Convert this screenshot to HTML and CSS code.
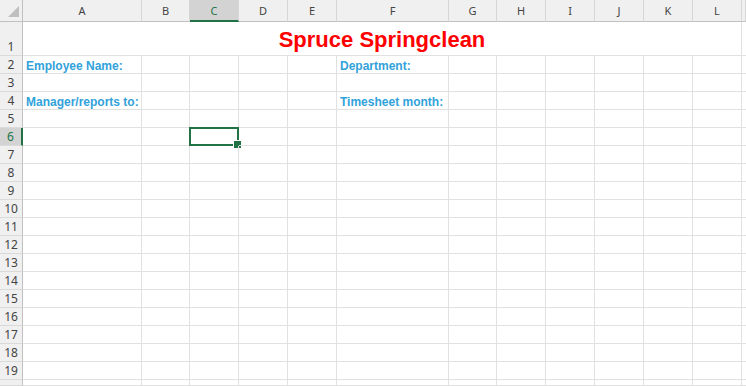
FILE: index.html
```html
<!DOCTYPE html>
<html lang="en">
<head>
    <meta charset="UTF-8">
    <title>Spruce Springclean</title>
    <link rel="stylesheet" href="styles.css">
</head>
<body>
<div class="sheet" id="sheet">
    <div class="corner"><span class="tri"></span></div>
</div>
<script>
    //列：A..L 再加一列露出一半的 M
    var cols=['A','B','C','D','E','F','G','H','I','J','K','L',''];
    var oSheet=document.getElementById('sheet');
    var selCol=2, selRow=6;
    function cell(cls,text) {
        var d=document.createElement('div');
        d.className=cls;
        if(text) d.textContent=text;
        oSheet.appendChild(d);
        return d;
    }
    for(var i=0; i<cols.length; i++){
        cell('colhead'+(i===selCol?' on':''),cols[i]);
    }
    //每行的内容：{列号:[类名,文字]}
    var content={
        2:{0:['label','Employee Name:'],5:['label','Department:']},
        4:{0:['label','Manager/reports to:'],5:['label','Timesheet month:']}
    };
    for(var r=1; r<=20; r++){
        cell('rowhead'+(r===selRow?' on':''),r<20?String(r):'');
        if(r===1){
            cell('cell title','Spruce Springclean');
            cell('cell last','');
            continue;
        }
        for(var c=0; c<cols.length; c++){
            var item=content[r]&&content[r][c];
            var d=cell('cell'+(c===cols.length-1?' last':'')+(item?' '+item[0]:''),item?item[1]:'');
            if(r===selRow&&c===selCol){
                var s=document.createElement('span');
                s.className='select';
                d.appendChild(s);
            }
        }
    }
</script>
</body>
</html>
```
FILE: styles.css
```css
*{
    margin: 0;
    padding: 0;
    box-sizing: border-box;
}
body{
    width: 746px;
    height: 386px;
    overflow: hidden;
    background: #fff;
    font-family: "Liberation Sans", Arial, sans-serif;
}
.sheet{
    display: grid;
    grid-template-columns: 23px 119px 48px 49px 49px 49px 112px 48px 49px 49px 49px 49px 49px 1fr;
    grid-template-rows: 22px 34px repeat(18, 18px) 1fr;
    height: 386px;
}
.corner{
    background: #f0f0f0;
    border-right: 1px solid #c0c0c0;
    border-bottom: 1px solid #c0c0c0;
    display: flex;
    align-items: flex-end;
    justify-content: flex-end;
    padding: 0 3px 4px 0;
}
.tri{
    width: 0;
    height: 0;
    border-left: 11px solid transparent;
    border-bottom: 11px solid #bfbfbf;
}
.colhead{
    background: #f0f0f0;
    border-right: 1px solid #d6d6d6;
    border-bottom: 1px solid #c0c0c0;
    font-family: "Noto Sans", sans-serif;
    font-size: 11px;
    line-height: 22px;
    text-align: center;
    color: #444;
}
.colhead.on{
    background: #d3d3d3;
    color: #217346;
    border-bottom: 2px solid #217346;
}
.rowhead{
    background: #f0f0f0;
    border-right: 1px solid #c0c0c0;
    border-bottom: 1px solid #dadada;
    font-family: "Noto Sans", sans-serif;
    font-size: 12px;
    text-align: center;
    color: #444;
    display: flex;
    align-items: flex-end;
    justify-content: center;
    line-height: 17px;
}
.rowhead.on{
    background: #d3d3d3;
    color: #217346;
    border-right: 2px solid #217346;
}
.cell{
    position: relative;
    border-right: 1px solid #e1e1e1;
    border-bottom: 1px solid #e1e1e1;
    font-size: 12px;
    line-height: 17px;
    white-space: nowrap;
}
.cell.last{
    border-right: none;
}
.title{
    grid-column: 2 / 14;
    text-align: center;
    color: #ff0000;
    font-weight: bold;
    font-size: 22px;
    line-height: 26px;
    padding-top: 5px;
}
.label{
    color: #31a2da;
    font-weight: bold;
    padding: 2px 0 0 3px;
}
.select{
    position: absolute;
    left: -1px;
    top: -1px;
    right: -1px;
    bottom: -1px;
    border: 2px solid #217346;
}
.select::after{
    content: '';
    position: absolute;
    right: -5px;
    bottom: -5px;
    width: 7px;
    height: 7px;
    background: #217346;
    border: 1px solid #fff;
}
```
